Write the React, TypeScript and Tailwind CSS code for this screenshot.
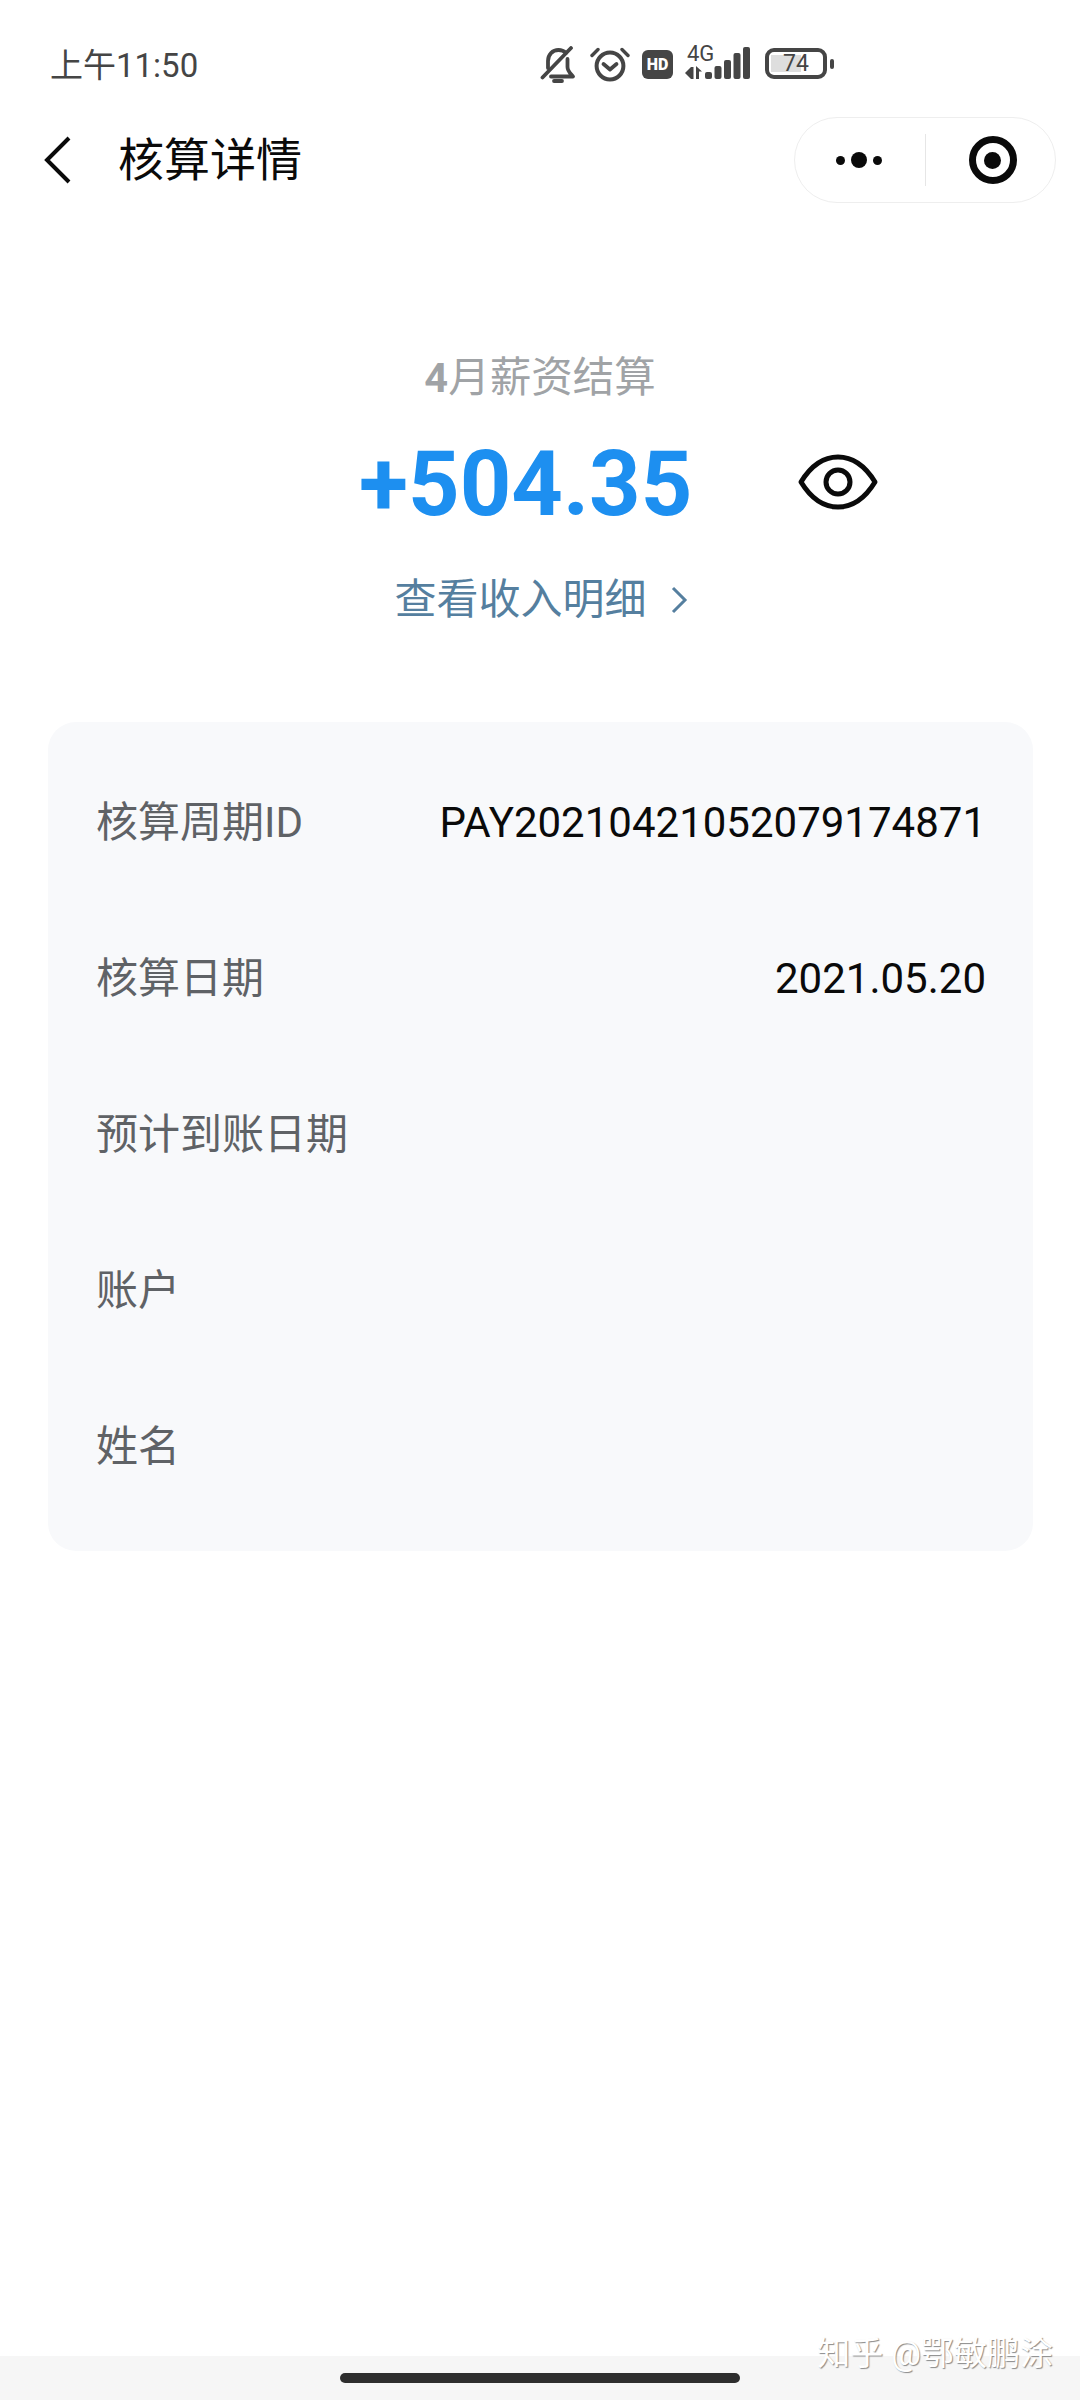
const FONT = "font-['Roboto','Noto_Sans_CJK_SC',sans-serif]";

const rows = [
  { label: "核算周期ID", value: "PAY20210421052079174871" },
  { label: "核算日期", value: "2021.05.20" },
  { label: "预计到账日期", value: "" },
  { label: "账户", value: "" },
  { label: "姓名", value: "" },
];

const BellOff = () => (
  <svg width="36" height="38" viewBox="0 0 36 38" fill="none" stroke="#454545" strokeWidth="3.8" strokeLinecap="round" strokeLinejoin="round">
    <path d="M8 22V15C8 8.5 12.5 4 18.5 4C21.5 4 24 5 26 7" />
    <path d="M27.5 13V21C27.5 25 30 27 33 30.5H11" />
    <path d="M14 35H22" />
    <path d="M2.5 31.5L31 2" />
  </svg>
);

const AlarmClock = () => (
  <svg width="40" height="36" viewBox="0 0 40 36" fill="none" stroke="#454545" strokeLinecap="round" strokeLinejoin="round">
    <circle cx="20" cy="20" r="13.4" strokeWidth="4" />
    <path d="M13.5 18L20 23.5L26.5 18" strokeWidth="3.8" />
    <path d="M2 9.5L8 3.5" strokeWidth="3.4" />
    <path d="M38 9.5L32 3.5" strokeWidth="3.4" />
  </svg>
);

const Signal = () => (
  <svg width="68" height="36" viewBox="0 0 68 36" fill="#454545">
    <path d="M6 23V35L0 29Z" />
    <rect x="6" y="23" width="2.5" height="12" />
    <path d="M11 35V22L17 27.5H14V35Z" />
    <rect x="20" y="28" width="7" height="7" rx="2" />
    <rect x="29.5" y="22" width="7" height="13" rx="2" />
    <rect x="39" y="16" width="7" height="19" rx="2" />
    <rect x="48.5" y="9" width="7" height="26" rx="2" />
    <rect x="58" y="3" width="7" height="32" rx="2" />
  </svg>
);

const Eye = () => (
  <svg width="80" height="56" viewBox="0 0 80 56" fill="none" stroke="#0a0a0a" strokeWidth="5" strokeLinejoin="round">
    <path d="M3 28C14 10 26 3 40 3C54 3 66 10 77 28C66 46 54 53 40 53C26 53 14 46 3 28Z" />
    <circle cx="40" cy="28" r="12" />
  </svg>
);

export default function App() {
  return (
    <div className={`${FONT} relative flex h-[2400px] w-[1080px] flex-col overflow-hidden bg-white`}>
      {/* status bar */}
      <div className="flex h-[100px] items-start pt-[44px]">
        <div className="ml-[50px] w-[490px] text-[33px] leading-[44px] text-[#454545]">上午11:50</div>
        <div className="flex items-start">
          <div className="mt-[2px]"><BellOff /></div>
          <div className="mt-[2px] ml-[14px]"><AlarmClock /></div>
          <div className="mt-[6px] ml-[12px] flex h-[29px] w-[31px] items-center justify-center rounded-[6px] bg-[#454545] text-[16px] leading-none font-black text-white">
            HD
          </div>
          <div className="relative ml-[12px]">
            <div className="absolute top-[0px] left-[2px] text-[22px] leading-[20px] text-[#454545]">4G</div>
            <Signal />
          </div>
          <div className="ml-[12px] flex items-center">
            <div className="relative mt-[4px] h-[31px] w-[62px] rounded-[9px] border-[4px] border-[#454545]">
              <div className="absolute top-[3px] bottom-[3px] left-[2px] w-[30px] bg-[#dedede]" />
              <div className="absolute inset-0 flex items-center justify-center text-[23px] leading-none text-[#454545]">74</div>
            </div>
            <div className="mt-[4px] ml-[3px] h-[10px] w-[4px] rounded-[2px] bg-[#454545]" />
          </div>
        </div>
      </div>

      {/* nav */}
      <div className="flex h-[120px] items-start justify-between pt-[17px] pr-[24px]">
        <div className="flex h-[86px] items-center">
          <svg className="ml-[43px]" width="30" height="50" viewBox="0 0 30 50" fill="none" stroke="#0a0a0a" strokeWidth="4">
            <path d="M26 3L4 25L26 47" />
          </svg>
          <h1 className="ml-[45px] text-[46px] leading-[56px] text-[#0a0a0a]">核算详情</h1>
        </div>
        <div className="flex h-[86px] w-[262px] items-center rounded-full border border-[#eeeeee]">
          <div className="flex w-[130px] items-center justify-center gap-[6px] pr-[2px]">
            <span className="h-[9px] w-[9px] rounded-full bg-[#0a0a0a]" />
            <span className="h-[16px] w-[16px] rounded-full bg-[#0a0a0a]" />
            <span className="h-[9px] w-[9px] rounded-full bg-[#0a0a0a]" />
          </div>
          <div className="h-[52px] w-px bg-[#e6e6e6]" />
          <div className="flex flex-1 items-center justify-center pl-[4px]">
            <div className="flex h-[48px] w-[48px] items-center justify-center rounded-full border-[7px] border-[#0a0a0a]">
              <span className="h-[17px] w-[17px] rounded-full bg-[#0a0a0a]" />
            </div>
          </div>
        </div>
      </div>

      {/* amount */}
      <div className="mt-[131px] text-center text-[41.5px] leading-[54px] text-[#a0a3a6]">
        <span className="font-bold">4</span>月薪资结算
      </div>
      <div className="mt-[32px] flex h-[96px] items-center pl-[359px]">
        <span className="text-[90px] leading-[96px] font-bold text-[#1d8ff0]">+504.35</span>
        <div className="mb-[6px] ml-[106px]"><Eye /></div>
      </div>
      <div className="mt-[38px] flex items-center justify-center pl-[3px] text-[42px] leading-[58px] text-[#557f9f]">
        查看收入明细
        <svg className="ml-[22px]" width="20" height="30" viewBox="0 0 20 30" fill="none" stroke="#557f9f" strokeWidth="3">
          <path d="M4 3L16 15L4 27" />
        </svg>
      </div>

      {/* details card */}
      <div className="mt-[93px] mr-[47px] ml-[48px] h-[829px] rounded-[28px] bg-[#f8f9fb] pt-[22px] pr-[47px] pb-[22px] pl-[48px]">
        {rows.map((row) => (
          <div key={row.label} className="flex h-[156px] items-center justify-between text-[42px]">
            <span className="text-[#5f6266]">{row.label}</span>
            {row.value && <span className="text-[#0a0a0a]">{row.value}</span>}
          </div>
        ))}
      </div>

      {/* gesture bar */}
      <div className="mt-auto flex h-[44px] items-start justify-center bg-[#f6f6f6] pt-[17px]">
        <div className="h-[10px] w-[400px] rounded-full bg-[#2e2e2e]" />
      </div>

      {/* watermark */}
      <div className="absolute top-[2335px] right-[27px] text-[33px] leading-[38px] text-white [text-shadow:1px_1px_1px_#8a8a8a]">
        知乎 @鄂敏鹏涂
      </div>
    </div>
  );
}
